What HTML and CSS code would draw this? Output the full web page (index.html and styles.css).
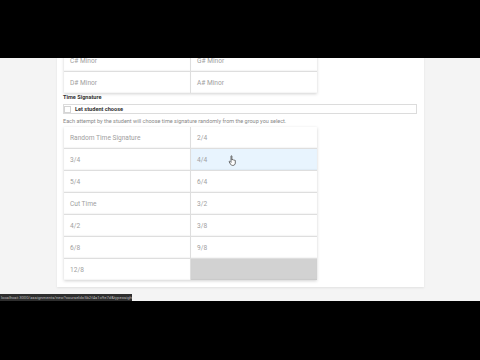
FILE: index.html
```html
<!DOCTYPE html>
<html lang="en">
<head>
    <meta charset="UTF-8">
    <title>Create Assignment</title>
    <link rel="stylesheet" href="styles.css">
</head>
<body>
    <div class="letterbox"></div>
    <div class="viewport">
        <div class="card">
            <div class="choice-grid">
                <div class="cell">C# Minor</div>
                <div class="cell">G# Minor</div>
                <div class="cell">D# Minor</div>
                <div class="cell">A# Minor</div>
            </div>

            <div class="section-label">Time Signature</div>
            <label class="check-row">
                <span class="checkbox"></span>
                <span>Let student choose</span>
            </label>
            <p class="hint">Each attempt by the student will choose time signature randomly from the group you select.</p>

            <div class="choice-grid">
                <div class="cell">Random Time Signature</div>
                <div class="cell">2/4</div>
                <div class="cell">3/4</div>
                <div class="cell hover">4/4</div>
                <div class="cell">5/4</div>
                <div class="cell">6/4</div>
                <div class="cell">Cut Time</div>
                <div class="cell">3/2</div>
                <div class="cell">4/2</div>
                <div class="cell">3/8</div>
                <div class="cell">6/8</div>
                <div class="cell">9/8</div>
                <div class="cell">12/8</div>
                <div class="cell empty"></div>
            </div>
        </div>

        <svg class="cursor" width="9" height="11" viewBox="0 0 9 11">
            <path d="M3 1.2c0-.6.9-.6.9 0V5l.3-.1c.2-.5.9-.5 1 0l.2.2c.3-.4.9-.3 1 .1.3-.3.9-.1.9.3V8c0 1.4-1 2.4-2.3 2.4H4.4c-.8 0-1.3-.4-1.7-1L1.2 7c-.3-.5.3-1 .8-.6L3 7.4z" fill="#fff" stroke="#333" stroke-width="0.7"/>
        </svg>

        <div class="status">localhost:3000/assignments/new?courseId=5b2f4a1c9e7d&amp;type=sight</div>
    </div>
</body>
</html>
```

FILE: styles.css
```css
body {
    margin: 0;
    width: 480px;
    height: 360px;
    overflow: hidden;
    background-color: #000;
    font-family: Roboto, "Liberation Sans", sans-serif;
}

.letterbox {
    height: 58px;
}

.viewport {
    position: relative;
    height: 243px;
    overflow: hidden;
    background-color: #f4f4f4;
}

.card {
    width: 367px;
    box-sizing: border-box;
    margin: -8px 0 0 57px;
    padding: 0 7px 7px 6px;
    background-color: #fff;
    box-shadow: 0 1px 2px rgba(0, 0, 0, 0.08);
}

.choice-grid {
    display: grid;
    grid-template-columns: 126px 126px;
    gap: 1px;
    width: 253px;
    margin-left: 1px;
    background-color: #dedede;
    box-shadow: 0 1px 3px rgba(0, 0, 0, 0.18);
}

.cell {
    height: 21px;
    display: flex;
    align-items: center;
    padding-left: 6px;
    background-color: #fff;
    box-shadow: inset 0 -1px 1px rgba(0, 0, 0, 0.04);
    color: #a0a0a0;
    font-size: 6.6px;
}

.cell.hover {
    background-color: #e8f4fe;
}

.cell.empty {
    background-color: #d2d2d2;
}

.section-label {
    margin-top: 1px;
    line-height: 7px;
    font-size: 5.6px;
    font-weight: bold;
    color: #333;
}

.check-row {
    display: flex;
    align-items: center;
    gap: 4px;
    height: 10px;
    margin-top: 3px;
    box-sizing: border-box;
    border: 1px solid #dcdcdc;
    font-size: 5.6px;
    font-weight: bold;
    color: #333;
}

.checkbox {
    width: 7px;
    height: 7px;
    box-sizing: border-box;
    border: 1px solid #d4d4d4;
    background-color: #fff;
}

.hint {
    margin: 4px 0 2px;
    line-height: 7px;
    font-size: 5.5px;
    color: #888;
}

.cursor {
    position: absolute;
    left: 228px;
    top: 97px;
}

.status {
    position: absolute;
    left: 0;
    bottom: 0;
    width: 131px;
    height: 7px;
    overflow: hidden;
    white-space: nowrap;
    padding-left: 1px;
    background-color: #2e2e2e;
    color: #bbb;
    font-size: 4.2px;
    line-height: 7px;
}
```
